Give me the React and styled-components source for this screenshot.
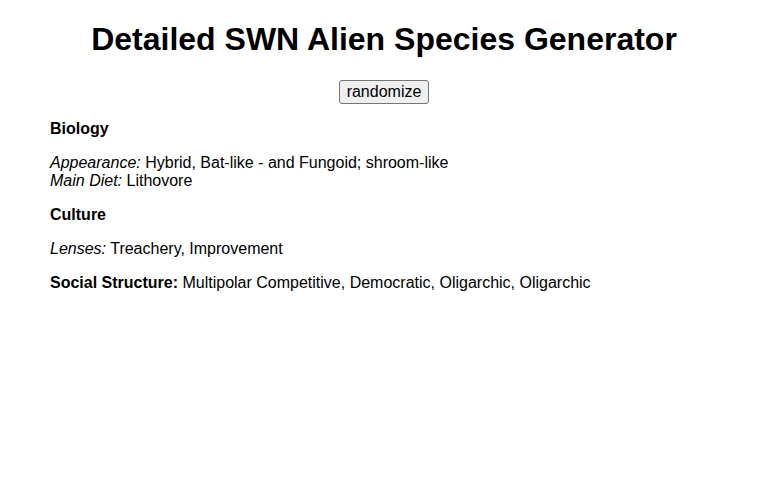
import React from "react";
import styled, { createGlobalStyle } from "styled-components";

const Global = createGlobalStyle`
  html, body { margin: 0; padding: 0; background: #fff; }
  body { font-family: "Liberation Sans", Arial, sans-serif; color: #000; font-size: 16px; }
`;

const Page = styled.div`
  padding: 0 50px;
`;

const Title = styled.h1`
  font-size: 32px;
  font-weight: bold;
  text-align: center;
  margin: 21.44px 0;
`;

const Controls = styled.div`
  display: flex;
  justify-content: center;
`;

const Button = styled.button`
  font-family: "Liberation Sans", Arial, sans-serif;
  font-size: 16px;
  color: #000;
  background: #efefef;
  border: 1px solid #767676;
  border-radius: 3px;
  padding: 2px 7px;
  line-height: normal;
`;

const Para = styled.p`
  margin: 16px 0;
  line-height: normal;
`;

const Label = styled.em`
  font-style: italic;
`;

const Strong = styled.strong`
  font-weight: bold;
`;

export default function App() {
  return (
    <Page>
      <Global />
      <Title>Detailed SWN Alien Species Generator</Title>
      <Controls>
        <Button>randomize</Button>
      </Controls>
      <Para><Strong>Biology</Strong></Para>
      <Para>
        <Label>Appearance:</Label> Hybrid, Bat-like - and Fungoid; shroom-like
        <br />
        <Label>Main Diet:</Label> Lithovore
      </Para>
      <Para><Strong>Culture</Strong></Para>
      <Para>
        <Label>Lenses:</Label> Treachery, Improvement
      </Para>
      <Para>
        <Strong>Social Structure:</Strong> Multipolar Competitive, Democratic, Oligarchic, Oligarchic
      </Para>
    </Page>
  );
}
